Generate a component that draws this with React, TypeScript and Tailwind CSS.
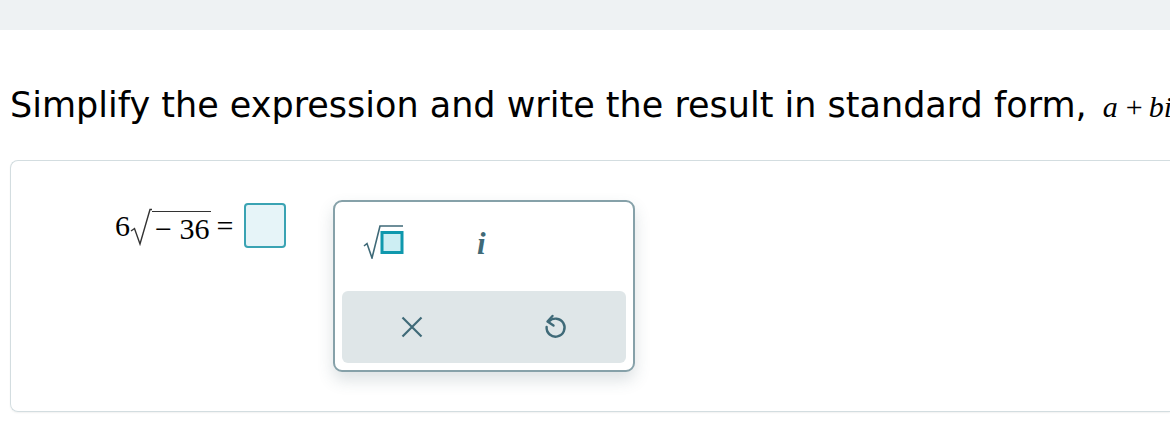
import { useState } from 'react';

const serif = { fontFamily: '"Liberation Serif", "Times New Roman", serif' };

const Radical = ({ className }: { className?: string }) => (
  <svg viewBox="0 0 22 38" className={className} fill="none">
    <path d="M1 23 L4.5 20.5 L10 36 L20 1.5 L22 1.5" stroke="currentColor" strokeWidth="1.4" strokeLinejoin="miter" />
  </svg>
);

const Palette = () => (
  <div className="absolute left-[322px] top-[39px] w-[302px] h-[172px] rounded-[9px] border-2 border-[#86a1a9] bg-white shadow-[0_8px_16px_rgba(60,90,100,0.18)] px-[7px] pt-[23px]">
    <div className="flex items-start h-[66px]">
      <button className="ml-[21px] flex items-start text-[#3f6a78]">
        <svg width="42" height="34" viewBox="0 0 42 34" fill="none">
          <path d="M1 21 L4 18.5 L9 33 L17 1 L40 1" stroke="#3f6a78" strokeWidth="1.6" />
          <rect x="19" y="7.5" width="20" height="20" fill="#cdeef3" stroke="#0f98ad" strokeWidth="3" />
        </svg>
      </button>
      <span
        className="ml-[72px] mt-[3px] text-[31px] leading-none font-bold italic text-[#3f6a78]"
        style={serif}
      >
        i
      </span>
    </div>
    <div className="h-[72px] rounded-[6px] bg-[#dfe6e8] flex items-center">
      <button className="ml-[59px]">
        <svg width="22" height="22" viewBox="0 0 22 22" fill="none">
          <path d="M1.5 1.5 L20.5 20.5 M20.5 1.5 L1.5 20.5" stroke="#3f6a78" strokeWidth="2.2" />
        </svg>
      </button>
      <button className="ml-[120px] mt-[1px]">
        <svg width="24" height="28" viewBox="0 0 24 28" fill="none">
          <path
            d="M6 7.5 A9 9 0 1 1 3.6 13"
            stroke="#3f6a78"
            strokeWidth="2.4"
            strokeLinecap="round"
          />
          <path d="M9.5 2 L4.5 7.5 L10.5 11.5" stroke="#3f6a78" strokeWidth="2.4" strokeLinecap="round" strokeLinejoin="round" />
        </svg>
      </button>
    </div>
  </div>
);

export default function App() {
  const [answer] = useState('');

  return (
    <div className="w-[1170px] h-[448px] bg-white overflow-hidden" style={{ fontFamily: '"DejaVu Sans", Verdana, sans-serif' }}>
      <div className="h-[30px] bg-[#eef2f3]" />

      <div className="pl-[10px] pt-[54px] whitespace-nowrap text-[35px] leading-[42px] text-black">
        Simplify the expression and write the result in standard form,{' '}
        <span className="ml-[5px] italic text-[30px]" style={serif}>
          a<span className="not-italic ml-[8px] mr-[6px]">+</span>b<span>i</span>
        </span>
      </div>

      <div className="relative ml-[10px] mt-[32px] h-[252px] rounded-l-[8px] border border-r-0 border-[#d3dde0] shadow-[0_1px_2px_rgba(0,0,0,0.06)]">
        <div className="flex items-center pl-[104px] pt-[42px]" style={serif}>
          <span className="text-[30px] leading-none text-black">6</span>
          <span className="flex items-end">
            <Radical className="w-[22px] h-[38px] text-[#333] mt-[2px]" />
            <span className="border-t-[1.5px] border-[#333] mt-[1px] pl-[3px] pr-[2px] text-[30px] leading-[34px] text-black">
              −&nbsp;36
            </span>
          </span>
          <span className="ml-[5px] text-[30px] leading-none text-black">=</span>
          <span className="ml-[11px] w-[42px] h-[45px] rounded-[4px] border-2 border-[#3aa3b3] bg-[#e6f4f8]">{answer}</span>
        </div>

        <Palette />
      </div>
    </div>
  );
}
